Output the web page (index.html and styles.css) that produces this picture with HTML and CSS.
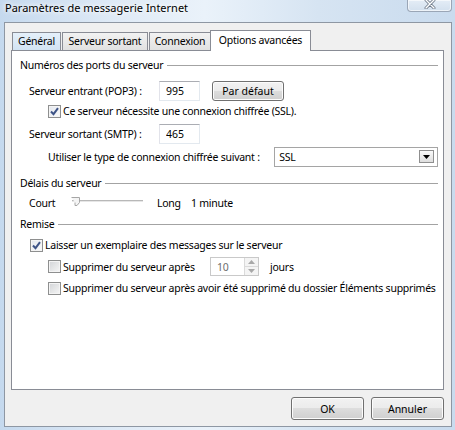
FILE: index.html
```
<!DOCTYPE html>
<html lang="fr">
<head>
  <meta charset="UTF-8">
  <title>Paramètres de messagerie Internet</title>
  <link rel="stylesheet" href="styles.css">
</head>
<body>
  <div class="window">
    <div class="titlebar">
      <span class="title">Paramètres de messagerie Internet</span>
      <div class="close-btn">
        <svg width="14" height="9" viewBox="0 0 14 9">
          <path d="M3 0 L11 8 M11 0 L3 8" stroke="#6b7787" stroke-width="3" stroke-linecap="round"/>
          <path d="M3 0 L11 8 M11 0 L3 8" stroke="#fff" stroke-width="1.4" stroke-linecap="round"/>
        </svg>
      </div>
    </div>

    <div class="client">
      <div class="tabs">
        <div class="tab tab-hover w-general">Général</div>
        <div class="tab w-sortant">Serveur sortant</div>
        <div class="tab w-connexion">Connexion</div>
        <div class="tab active w-options">Options avancées</div>
      </div>

      <div class="panel">
        <div class="group-title g-ports">Numéros des ports du serveur</div>

        <div class="row r-pop">
          <span class="lbl port-lbl">Serveur entrant (POP3) :</span>
          <input class="textbox port" type="text" value="995">
          <button class="btn btn-small">Par défaut</button>
        </div>

        <div class="row r-ssl">
          <span class="check checked">
            <svg width="11" height="11" viewBox="0 0 11 11"><path d="M2 5.5 L4.5 8.2 L9 2.2" fill="none" stroke="#3e5487" stroke-width="2"/></svg>
          </span>
          <span class="lbl">Ce serveur nécessite une connexion chiffrée (SSL).</span>
        </div>

        <div class="row r-smtp">
          <span class="lbl port-lbl">Serveur sortant (SMTP) :</span>
          <input class="textbox port" type="text" value="465">
        </div>

        <div class="row r-crypt">
          <span class="lbl crypt-lbl">Utiliser le type de connexion chiffrée suivant :</span>
          <div class="combo">
            <span class="combo-text">SSL</span>
            <span class="combo-arrow">
              <svg width="7" height="4" viewBox="0 0 7 4"><path d="M0 0 H7 L3.5 4 Z" fill="#000"/></svg>
            </span>
          </div>
        </div>

        <div class="group-title g-delay">Délais du serveur</div>

        <div class="row r-slider">
          <span class="lbl court">Court</span>
          <svg class="slider" width="73" height="14" viewBox="0 0 73 14">
            <line x1="2" y1="5.5" x2="73" y2="5.5" stroke="#b8b8b8"/>
            <line x1="2" y1="6.5" x2="73" y2="6.5" stroke="#e6e6e6"/>
            <path d="M1.5 2.5 H9.5 V7.5 L7 10.5 H5 V7.5" fill="#f4f4f4" stroke="#a6a6a6"/>
          </svg>
          <span class="lbl long">Long</span>
          <span class="lbl">1 minute</span>
        </div>

        <div class="group-title g-remise">Remise</div>

        <div class="row r-keep">
          <span class="check checked">
            <svg width="11" height="11" viewBox="0 0 11 11"><path d="M2 5.5 L4.5 8.2 L9 2.2" fill="none" stroke="#3e5487" stroke-width="2"/></svg>
          </span>
          <span class="lbl">Laisser un exemplaire des messages sur le serveur</span>
        </div>

        <div class="row r-after">
          <span class="check"></span>
          <span class="lbl after-lbl">Supprimer du serveur après</span>
          <div class="spin">
            <span class="spin-text">10</span>
            <span class="spin-btns">
              <span class="spin-up"><svg width="7" height="4" viewBox="0 0 7 4"><path d="M0 4 H7 L3.5 0 Z" fill="#a8a8a8"/></svg></span>
              <span class="spin-down"><svg width="7" height="4" viewBox="0 0 7 4"><path d="M0 0 H7 L3.5 4 Z" fill="#a8a8a8"/></svg></span>
            </span>
          </div>
          <span class="lbl">jours</span>
        </div>

        <div class="row r-deleted">
          <span class="check"></span>
          <span class="lbl">Supprimer du serveur après avoir été supprimé du dossier Éléments supprimés</span>
        </div>
      </div>

      <div class="footer">
        <button class="btn">OK</button>
        <button class="btn">Annuler</button>
      </div>
    </div>
  </div>
</body>
</html>
```

FILE: styles.css
```
body {
  margin: 0;
  font-family: "Noto Sans", "Liberation Sans", sans-serif;
  font-size: 10.5px;
  letter-spacing: -0.25px;
  color: #000;
}

.window {
  width: 455px;
  height: 430px;
  box-sizing: border-box;
  padding: 0 3px 3px 4px;
  display: flex;
  flex-direction: column;
  background: linear-gradient(to right, #c5d9ee 0%, #dfeaf6 25%, #eaf2fa 45%, #d6e4f2 70%, #c9dbee 100%);
}

/* title bar */
.titlebar {
  height: 22px;
  display: flex;
  justify-content: space-between;
  align-items: flex-start;
}
.title {
  padding: 1px 0 0 1px;
  line-height: 14px;
  font-size: 11px;
  letter-spacing: 0;
  text-shadow: 0 0 4px #fff, 0 0 6px #fff;
}
.close-btn {
  width: 45px;
  height: 12px;
  box-sizing: border-box;
  border: 1px solid #9aa6b6;
  border-top: none;
  border-radius: 0 0 4px 4px;
  box-shadow: inset 0 0 0 1px rgba(255,255,255,0.6);
  background: linear-gradient(#e4edf6, #d3e0ee);
  display: flex;
  justify-content: center;
  align-items: flex-start;
}

/* dialog body */
.client {
  flex: 1;
  background: #f0f0f0;
  border: 1px solid #8e97a3;
  padding: 7px 7px 0 6px;
  display: flex;
  flex-direction: column;
}

.tabs {
  display: flex;
  align-items: flex-end;
  height: 21px;
  margin-bottom: -1px;
  padding-left: 1px;
}
.tab {
  height: 18px;
  box-sizing: border-box;
  border: 1px solid #898c95;
  border-bottom: none;
  margin-bottom: 1px;
  background: linear-gradient(#f2f2f2, #e1e1e1);
  text-align: center;
  line-height: 16px;
}
.tab + .tab {
  margin-left: 1px;
}
.tab-hover {
  background: linear-gradient(#e5f0fa, #d2e3f3);
}
.tab.active {
  height: 21px;
  margin-bottom: 0;
  margin-left: -1px;
  background: #fff;
  line-height: 18px;
  position: relative;
  z-index: 1;
}
.w-general { width: 49px; }
.w-sortant { width: 86px; }
.w-connexion { width: 62px; }
.w-options { width: 101px; }

.panel {
  height: 340px;
  box-sizing: border-box;
  border: 1px solid #898c95;
  background: #fff;
  padding: 0 5px 0 8px;
}

/* group headings with the etched line */
.group-title {
  display: flex;
  align-items: center;
  gap: 4px;
  height: 14px;
  white-space: nowrap;
}
.group-title::after {
  content: "";
  flex: 1;
  border-top: 1px solid #a3a3a3;
}
.g-ports { margin-top: 7px; }
.g-delay { margin-top: 9px; }
.g-remise { margin-top: 7px; }

.row {
  display: flex;
  align-items: center;
  white-space: nowrap;
}
.r-pop { height: 21px; margin-top: 8px; padding-left: 9px; }
.r-ssl { height: 14px; margin-top: 3px; padding-left: 28px; }
.r-smtp { height: 21px; margin-top: 5px; padding-left: 9px; }
.r-crypt { height: 21px; margin-top: 2px; padding-left: 28px; }
.r-slider { height: 14px; margin-top: 6px; padding-left: 9px; }
.r-keep { height: 14px; margin-top: 7px; padding-left: 10px; }
.r-after { height: 19px; margin-top: 5px; padding-left: 28px; }
.r-deleted { height: 14px; margin-top: 5px; padding-left: 28px; }

.port-lbl { width: 130px; }
.crypt-lbl { width: 228px; }
.after-lbl { width: 147px; }
.court { width: 41px; }
.long { margin-left: 14px; width: 34px; }

/* text boxes */
.textbox {
  box-sizing: border-box;
  height: 20px;
  border: 1px solid;
  border-color: #abadb3 #e3e9ef #e3e9ef #e2e3ea;
  padding: 0 0 0 6px;
  font: inherit;
  color: #000;
  outline: none;
}
.port { width: 41px; }

.btn {
  width: 73px;
  height: 23px;
  box-sizing: border-box;
  border: 1px solid #707070;
  border-radius: 3px;
  background: linear-gradient(#f2f2f2 0%, #ebebeb 50%, #dddddd 50%, #cfcfcf 100%);
  box-shadow: inset 0 0 0 1px #fcfcfc;
  font: inherit;
  color: #000;
  padding: 0;
}
.btn-small {
  width: 72px;
  height: 20px;
  margin-left: 12px;
}

/* checkboxes */
.check {
  width: 13px;
  height: 13px;
  box-sizing: border-box;
  border: 1px solid #8e8f8f;
  background: linear-gradient(135deg, #d2d4d7, #f6f6f6);
  box-shadow: inset 0 0 0 1px #f4f4f4;
  margin-right: 2px;
  display: flex;
  align-items: center;
  justify-content: center;
  flex: none;
}
.check.checked {
  background: linear-gradient(135deg, #e3e7ee, #fafafa);
}

/* combo box */
.combo {
  width: 165px;
  height: 20px;
  box-sizing: border-box;
  border: 1px solid #a5a5a5;
  background: #fff;
  display: flex;
  align-items: center;
  justify-content: space-between;
  padding: 0 3px 0 4px;
}
.combo-arrow {
  width: 15px;
  height: 13px;
  box-sizing: border-box;
  border: 1px solid #8f8f8f;
  background: linear-gradient(#fafafa, #dedede);
  display: flex;
  align-items: center;
  justify-content: center;
}

.slider {
  margin-top: -3px;
}

/* disabled spin box */
.spin {
  width: 49px;
  height: 19px;
  box-sizing: border-box;
  border: 1px solid #c9c9c9;
  display: flex;
  margin-right: 11px;
}
.spin-text {
  flex: 1;
  color: #6d6d6d;
  padding-left: 6px;
  line-height: 18px;
}
.spin-btns {
  width: 13px;
  display: flex;
  flex-direction: column;
  border-left: 1px solid #dadada;
}
.spin-up, .spin-down {
  flex: 1;
  display: flex;
  align-items: center;
  justify-content: center;
  background: #f4f4f4;
}
.spin-up {
  border-bottom: 1px solid #dadada;
}

.footer {
  display: flex;
  justify-content: flex-end;
  gap: 7px;
  padding-top: 7px;
}
```
